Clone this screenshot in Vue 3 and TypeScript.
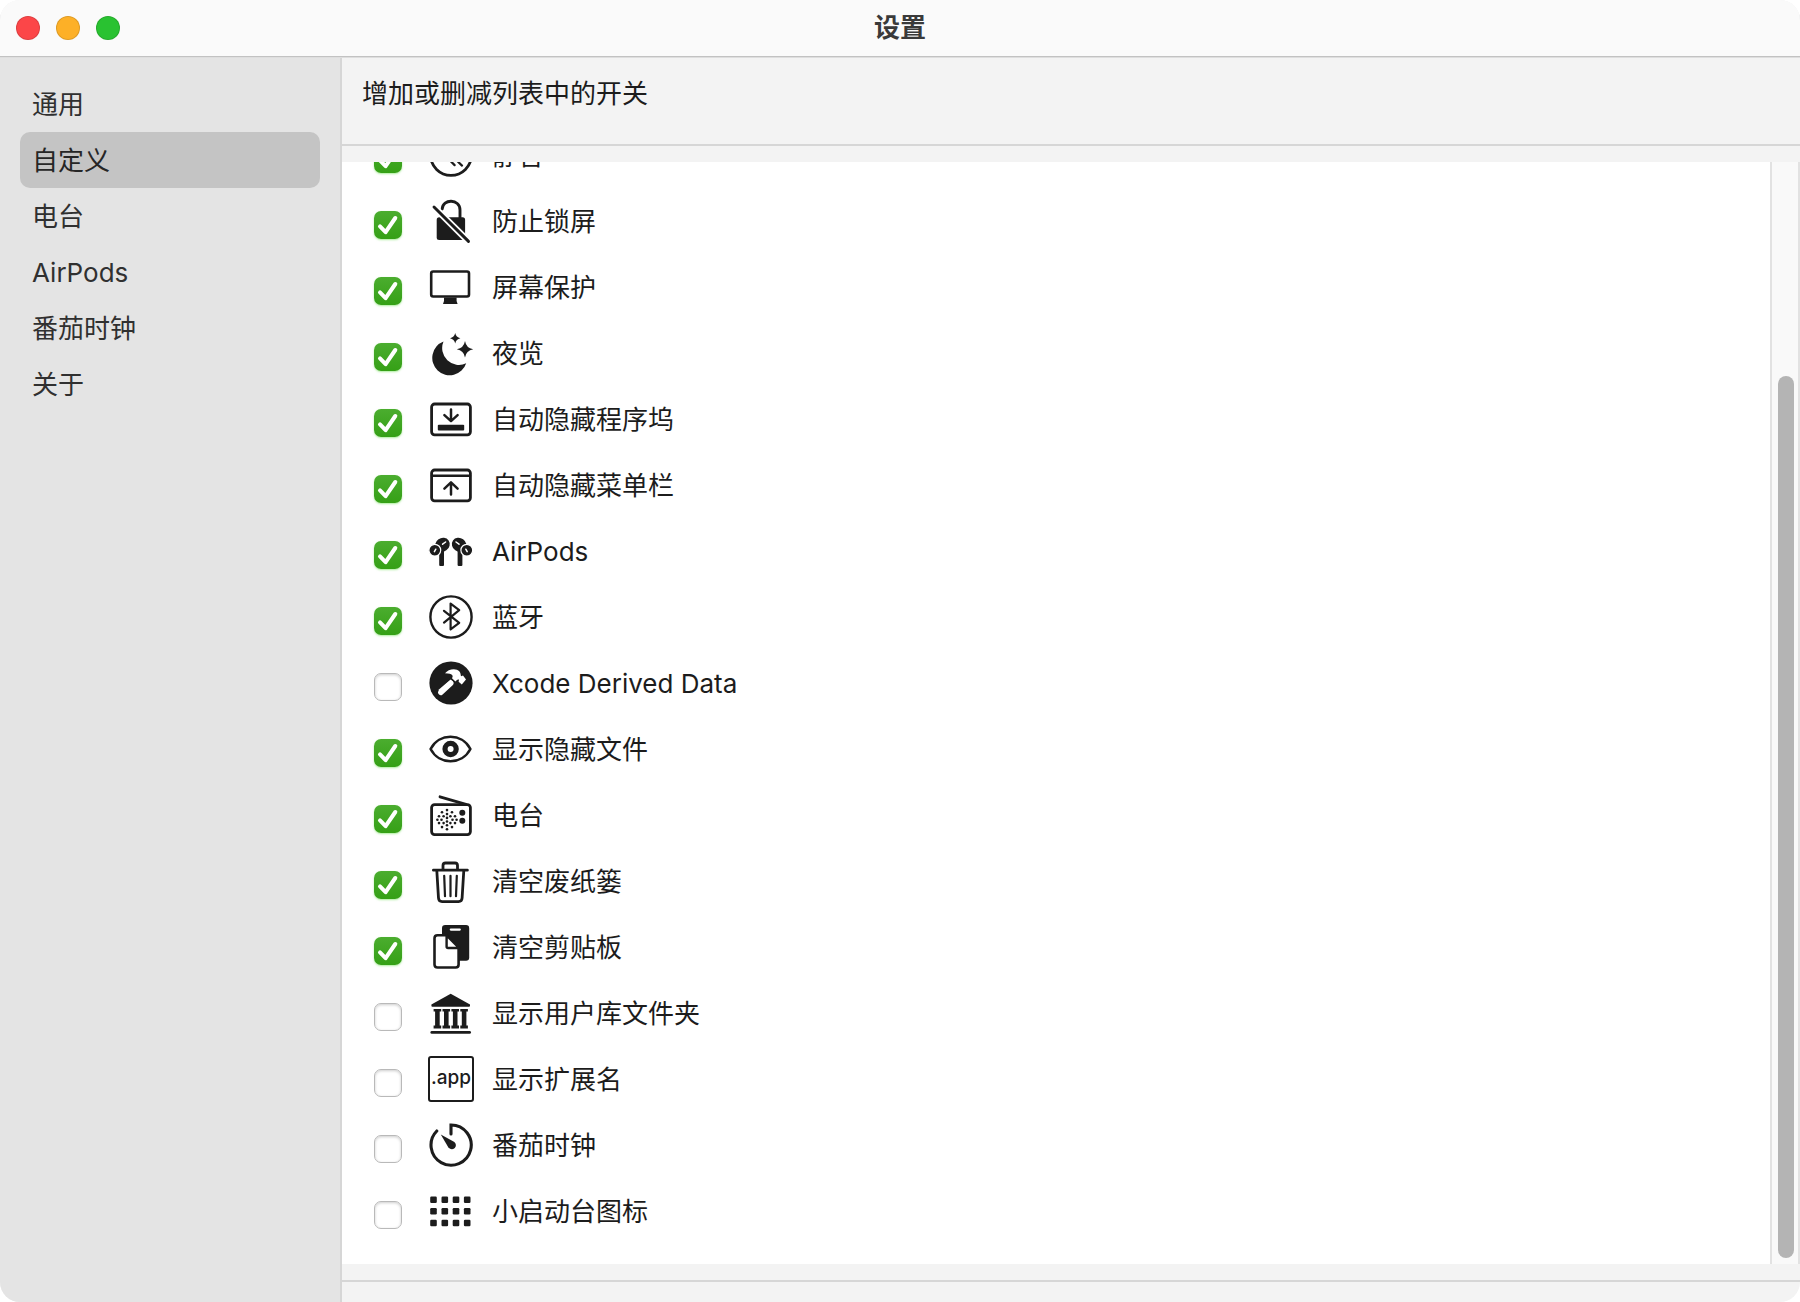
<script setup lang="ts">
import { ref } from 'vue'

interface SwitchItem {
  id: string
  label: string
  enabled: boolean
}

const sections: string[] = ['通用', '自定义', '电台', 'AirPods', '番茄时钟', '关于']
const current = ref('自定义')

const switches = ref<SwitchItem[]>([
  { id: 'mute', label: '静音', enabled: true },
  { id: 'lock', label: '防止锁屏', enabled: true },
  { id: 'screen', label: '屏幕保护', enabled: true },
  { id: 'night', label: '夜览', enabled: true },
  { id: 'dock', label: '自动隐藏程序坞', enabled: true },
  { id: 'menubar', label: '自动隐藏菜单栏', enabled: true },
  { id: 'airpods', label: 'AirPods', enabled: true },
  { id: 'bluetooth', label: '蓝牙', enabled: true },
  { id: 'xcode', label: 'Xcode Derived Data', enabled: false },
  { id: 'eye', label: '显示隐藏文件', enabled: true },
  { id: 'radio', label: '电台', enabled: true },
  { id: 'trash', label: '清空废纸篓', enabled: true },
  { id: 'clipboard', label: '清空剪贴板', enabled: true },
  { id: 'library', label: '显示用户库文件夹', enabled: false },
  { id: 'extension', label: '显示扩展名', enabled: false },
  { id: 'timer', label: '番茄时钟', enabled: false },
  { id: 'launchpad', label: '小启动台图标', enabled: false },
])

const podHalf =
  '<g fill="currentColor"><ellipse cx="15.4" cy="17.8" rx="7.6" ry="6.8" transform="rotate(-35 15.4 17.8)"/><rect x="12.2" y="22" width="4.8" height="17" rx="1"/></g>' +
  '<circle cx="7.8" cy="23.2" r="5.9" fill="currentColor" stroke="#fff" stroke-width="1.2"/>' +
  '<path d="M7.4 24.6l1.4-2.4M15.6 17.2l3-2.2" stroke="#fff" stroke-width="1.5"/>'

// Speaker grille: rows of dots arranged in a disc.
const grille = [
  [-9.6, [0]],
  [-7.4, [-5, 5]],
  [-5.6, [0]],
  [-3.4, [-8, -3.4, 3.4, 8]],
  [-1.8, [0]],
  [0, [-9.6, -5.5, 5.5, 9.6]],
  [1.8, [0]],
  [3.4, [-8, -3.4, 3.4, 8]],
  [5.6, [0]],
  [7.4, [-5, 5]],
  [9.6, [0]],
] as [number, number[]][]
const grilleDots = grille
  .map(([y, xs]) => xs.map((x) => `<circle cx="${20 + x}" cy="${28.7 + y}" r="1.3"/>`).join(''))
  .join('')

const tiles = [12.7, 24.3, 36]
  .map((y) => [6.5, 17.8, 29, 40.2].map((x) => `<rect x="${x - 3.3}" y="${y - 3.2}" width="6.6" height="6.4" rx="1.2"/>`).join(''))
  .join('')

const columns = [10.4, 19.3, 28.2, 37.1]
  .map((x) => `<path d="M${x - 3.8} 20h7.6v2.600h-1.500v14h1.500v2.800h-7.600v-2.800h1.500v-14h-1.500z"/>`)
  .join('')

const icons: Record<string, string> = {
  mute: '<circle cx="24" cy="24" r="20.4" stroke-width="2.8"/><path d="M14 14l21 20.600M22 28.500l5.600 5.600" stroke-width="2.2"/>',
  lock:
    '<path d="M15.2 12C15.5 1.5 33 1.5 33 13v8" stroke-width="2.9"/><rect x="9.7" y="20.3" width="28.4" height="22.7" rx="2.5" fill="currentColor" stroke="none"/>' +
    '<path d="M7 10L41.5 44.4" stroke="#fff" stroke-width="6.6" stroke-linecap="butt"/><path d="M7 10L41.5 44.4" stroke-width="2.9"/>',
  screen:
    '<rect x="4.2" y="8.5" width="37.8" height="25" rx="2" stroke-width="2.6"/><path d="M17 34.5h12.6v3.5l1 3H16l1-3z" fill="currentColor" stroke="none"/>',
  night:
    '<g fill="currentColor" stroke="none"><path d="M16.5 12.6A17.4 17.4 0 1 0 39.2 34.3A16.8 16.8 0 0 1 16.5 12.6z"/>' +
    '<path d="M38 12q1.200 7.100 8.200 8.200q-7 1.200-8.200 8.200q-1.200-7-8.200-8.200q7-1.200 8.200-8.200z"/><path d="M28.2 4q.9 4.500 5.200 5.200q-4.300.9-5.200 5.200q-.9-4.300-5.200-5.200q4.300-.7 5.200-5.200z"/></g>',
  dock:
    '<rect x="4.6" y="9" width="38.800" height="30.800" rx="3" stroke-width="2.800"/><path d="M24 14.500v11.500M17.400 20.200l6.600 6l6.600-6" stroke-width="2.500"/>' +
    '<rect x="10.800" y="29.800" width="26.400" height="5.600" rx="1" fill="currentColor" stroke="none"/>',
  menubar:
    '<rect x="4.6" y="9" width="38.800" height="30.800" rx="3" stroke-width="2.800"/><path d="M5 14.800h38M24 33.500v-12M17.400 27.600l6.600-6.200l6.600 6.200" stroke-width="2.500"/>',
  airpods: `<g stroke="none">${podHalf}</g><g stroke="none" transform="matrix(-1 0 0 1 47.6 0)">${podHalf}</g>`,
  bluetooth:
    '<circle cx="24" cy="24" r="20.6" stroke-width="2.4"/><path d="M17 17.8L32.2 29.8L23.6 36.3V10.6L32.2 17.2L17 29.6" stroke-width="2.2"/>',
  xcode:
    '<circle cx="24" cy="24" r="21.6" fill="currentColor" stroke="none"/><path d="M13.800 33.400L23.800 24.200" stroke="#fff" stroke-width="5.400"/><path d="M12.600 32.600L25 22" stroke="#fff" stroke-width="4" stroke-linecap="butt"/>' +
    '<path d="M18 14.300C21 10 29 8.500 32.500 12.400C34 14.400 33.500 16 34 17.200L36 16.600L39 20.400L34.800 25.600L31.600 22.800L32 20.800C30.500 20 29.500 21.500 28.400 22.600L25 19.200C26.600 17 26 14.600 18 14.300z" fill="#fff" stroke="none"/>',
  eye:
    '<path d="M3.6 24C12 7.700 35 7.700 43.400 24C35 40.300 12 40.300 3.600 24z" stroke-width="2.600"/><circle cx="23.600" cy="24" r="5.600" stroke-width="5.200"/>',
  radio: `<rect x="4.6" y="13.6" width="38.8" height="30" rx="3" stroke-width="2.8"/><path d="M13 5.8L39 13.4" stroke-width="2.8"/><g fill="currentColor" stroke="none"><circle cx="35.3" cy="21.8" r="3"/><circle cx="35.3" cy="29.8" r="3"/>${grilleDots}</g>`,
  trash:
    '<path d="M6.4 13.2h34M16 13V8.500q0-2.500 2.500-2.500h9.500q2.500 0 2.500 2.500V13M9.800 13.500l1.700 27.500q.2 3.600 3.600 3.600h16.400q3.400 0 3.600-3.600l1.700-27.500" stroke-width="2.800"/><path d="M17.200 18.800l.8 20.400M23.500 18.800v20.400M29.800 18.800l-.8 20.400" stroke-width="2.200"/>',
  clipboard:
    '<rect x="15" y="2" width="27.2" height="35.8" rx="3.2" fill="currentColor" stroke="none"/><path d="M23.8 6.6h9" stroke="#fff" stroke-width="2.2"/>' +
    '<path d="M10.5 12.3h9L31.6 25V41.5q0 3-3 3H10.500q-3 0-3-3V15.300q0-3 3-3z" fill="#fff" stroke-width="2.600"/><path d="M19.600 12.500v11q0 1.500 1.500 1.500H32z" fill="#fff" stroke-width="2.400"/>',
  library: `<g fill="currentColor" stroke="none"><path d="M23.700 4.800L43 15.500v1.200q0 1-1 1H5.400q-1 0-1-1v-1.200z"/>${columns}</g><path d="M4.800 43.400h37.800" stroke-width="2.800"/>`,
  timer:
    '<path d="M24 13V4A20.100 20.100 0 1 1 9.800 10" stroke-width="3.100" stroke-linejoin="miter"/><path d="M13.800 13.400L27.400 21Q30.200 24 27.800 27Q24.500 29.600 21.400 26.600z" fill="currentColor" stroke="none"/>',
  launchpad: `<g fill="currentColor" stroke="none">${tiles}</g>`,
}
</script>

<template>
  <div class="window">
    <header class="titlebar">
      <div class="lights">
        <button class="light close" aria-label="关闭"></button>
        <button class="light minimize" aria-label="最小化"></button>
        <button class="light zoom" aria-label="缩放"></button>
      </div>
      <h1>设置</h1>
    </header>
    <div class="body">
      <nav class="sidebar">
        <button
          v-for="name in sections"
          :key="name"
          class="section"
          :class="{ active: name === current }"
          @click="current = name"
        >
          {{ name }}
        </button>
      </nav>
      <main class="content">
        <h2>增加或删减列表中的开关</h2>
        <div class="viewport">
          <ul class="list">
            <li v-for="item in switches" :key="item.id">
              <label class="row">
                <span class="check">
                  <input v-model="item.enabled" type="checkbox" />
                  <svg v-if="item.enabled" viewBox="0 0 28 28" aria-hidden="true">
                    <path d="M6 15.4L11.6 21.2L21.3 7" />
                  </svg>
                </span>
                <span v-if="item.id === 'extension'" class="icon ext">.app</span>
                <svg v-else class="icon" viewBox="0 0 48 48" aria-hidden="true" v-html="icons[item.id]"></svg>
                <span class="name">{{ item.label }}</span>
              </label>
            </li>
          </ul>
          <div class="scrollbar"><div class="thumb"></div></div>
        </div>
        <footer class="bottom"></footer>
      </main>
    </div>
  </div>
</template>

<style>
body {
  margin: 0;
  background: #fff;
}
</style>

<style scoped>
.window {
  display: flex;
  flex-direction: column;
  height: 100vh;
  overflow: hidden;
  border-radius: 20px;
  background: #f3f3f3;
  color: #1c1c1c;
  font-family: Inter, 'Noto Sans CJK SC', sans-serif;
  font-size: 26px;
  line-height: 40px;
}
.titlebar {
  display: grid;
  grid-template-columns: 1fr auto 1fr;
  align-items: center;
  height: 56px;
  flex: none;
  background: #fafafa;
  border-bottom: 1px solid #c2c2c2;
  box-shadow: 0 1px 0 #dedede;
  z-index: 1;
}
.lights {
  display: flex;
  gap: 16px;
  padding-left: 16px;
}
.light {
  width: 24px;
  height: 24px;
  padding: 0;
  border: 1px solid rgba(0, 0, 0, 0.12);
  border-radius: 50%;
}
.close { background: #fc4648; }
.minimize { background: #fdb027; }
.zoom { background: #29c231; }
h1 {
  margin: 0;
  font-size: 26px;
  line-height: 40px;
  font-weight: 700;
  color: #3a3a3a;
}
.body {
  display: flex;
  flex: 1;
  min-height: 0;
}
.sidebar {
  display: flex;
  flex-direction: column;
  flex: none;
  box-sizing: border-box;
  width: 342px;
  padding: 19px 20px;
  background: #e4e4e4;
  border-right: 2px solid #d6d6d6;
}
.section {
  height: 56px;
  padding: 2px 12px 0;
  border: 0;
  border-radius: 10px;
  background: none;
  color: #303030;
  font: inherit;
  text-align: left;
}
.section.active {
  background: #c4c4c4;
  color: #262626;
}
.content {
  display: flex;
  flex-direction: column;
  flex: 1;
  min-width: 0;
}
h2 {
  margin: 0 0 16px;
  padding: 17px 20px 30px;
  border-bottom: 2px solid #d6d6d6;
  font-size: 26px;
  line-height: 40px;
  font-weight: 400;
}
.viewport {
  display: flex;
  flex: 1;
  min-height: 0;
  overflow: hidden;
  background: #fff;
}
.list {
  display: flex;
  flex-direction: column;
  justify-content: flex-end;
  flex: 1;
  margin: 0;
  padding: 0 0 20px 32px;
  list-style: none;
}
.row {
  display: flex;
  align-items: center;
  height: 66px;
}
.check {
  display: grid;
  margin: 8px 25px 0 0;
}
.check > * {
  grid-area: 1 / 1;
  width: 28px;
  height: 28px;
}
.check input {
  appearance: none;
  box-sizing: border-box;
  margin: 0;
  border: 1px solid #b9b9b9;
  border-radius: 7px;
  background: #fff;
  box-shadow: inset 0 1px 3px rgba(0, 0, 0, 0.2);
}
.check input:checked {
  border: 0;
  background: linear-gradient(#4bad2f, #35a016);
  box-shadow: 0 1px 2px rgba(90, 220, 60, 0.5);
}
.check svg {
  fill: none;
  stroke: #fff;
  stroke-width: 4px;
  stroke-linecap: round;
  stroke-linejoin: round;
  pointer-events: none;
}
.icon {
  flex: none;
  width: 48px;
  height: 48px;
  margin-right: 17px;
  fill: none;
  stroke: currentColor;
  stroke-linecap: round;
  stroke-linejoin: round;
}
.ext {
  display: flex;
  justify-content: center;
  box-sizing: border-box;
  width: 46px;
  height: 46px;
  margin: 0 18px 0 1px;
  border: 2px solid #1c1c1c;
  border-radius: 3px;
  font-size: 19px;
  line-height: 40px;
  font-weight: 500;
}
.name {
  padding-top: 2px;
}
.scrollbar {
  display: flex;
  flex-direction: column;
  flex: none;
  box-sizing: border-box;
  width: 30px;
  padding: 0 4px 6px 6px;
  border: solid #e2e2e2;
  border-width: 0 2px;
  background: #f9f9f9;
}
.thumb {
  width: 16px;
  height: 80.5%;
  margin-top: auto;
  border-radius: 8px;
  background: #b4b4b4;
}
.bottom {
  flex: none;
  height: 20px;
  margin-top: 16px;
  border-top: 2px solid #d6d6d6;
}
</style>
